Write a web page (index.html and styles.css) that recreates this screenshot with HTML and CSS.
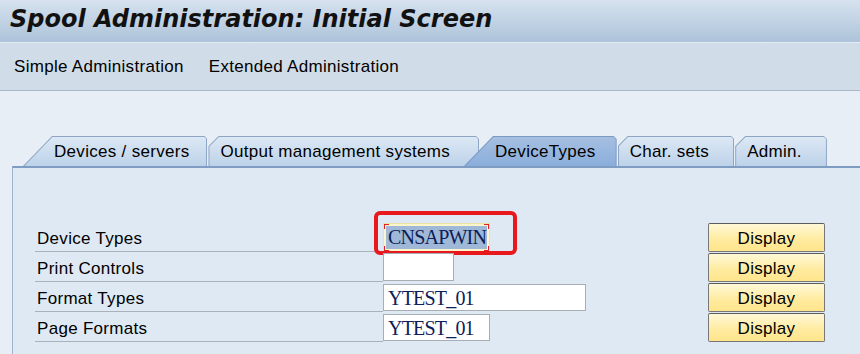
FILE: index.html
```html
<!DOCTYPE html>
<html lang="en">
  <head>
    <meta charset="utf-8" />
    <title>Spool Administration: Initial Screen</title>
    <link rel="stylesheet" href="styles.css">
  </head>
  <body>
    <header class="title-bar">
      <h1>Spool Administration: Initial Screen</h1>
    </header>

    <nav class="menu-bar">
      <span class="menu-item">Simple Administration</span>
      <span class="menu-item">Extended Administration</span>
    </nav>

    <main class="screen">
      <div class="tab-strip">
        <div class="tab tab-slanted"><span class="tab-label">Devices / servers</span></div>
        <div class="tab tab-wide"><span class="tab-label">Output management systems</span></div>
        <div class="tab tab-slanted tab-active"><span class="tab-label">DeviceTypes</span></div>
        <div class="tab"><span class="tab-label">Char. sets</span></div>
        <div class="tab"><span class="tab-label">Admin.</span></div>
      </div>

      <section class="tab-panel">
        <div class="form-grid">
          <div class="field-label">Device Types</div>
          <div class="field-cell">
            <div class="input input-focus"><span class="selection">CNSAPWIN</span></div>
            <div class="annotation"></div>
          </div>
          <button class="btn">Display</button>

          <div class="field-label">Print Controls</div>
          <div class="field-cell">
            <div class="input input-short"></div>
          </div>
          <button class="btn">Display</button>

          <div class="field-label">Format Types</div>
          <div class="field-cell">
            <div class="input input-long">YTEST_01</div>
          </div>
          <button class="btn">Display</button>

          <div class="field-label">Page Formats</div>
          <div class="field-cell">
            <div class="input input-medium">YTEST_01</div>
          </div>
          <button class="btn">Display</button>
        </div>
      </section>
    </main>
  </body>
</html>
```

FILE: styles.css
```css
* {
  box-sizing: border-box;
}

body {
  margin: 0;
  width: 860px;
  height: 354px;
  overflow: hidden;
  background: #e8eef6;
  font-family: "Liberation Sans", Arial, sans-serif;
  font-size: 17px;
  letter-spacing: 0.3px;
  color: #000;
}

/* title */
.title-bar {
  height: 43px;
  padding-left: 10px;
  background: linear-gradient(#d6e2ee, #adc3da);
  border-bottom: 1px solid #e4ecf4;
}

.title-bar h1 {
  margin: 0;
  font-family: "DejaVu Sans", Verdana, sans-serif;
  font-size: 24px;
  font-weight: bold;
  font-style: italic;
  letter-spacing: 0;
  line-height: 38px;
  color: #111;
}

/* menu */
.menu-bar {
  height: 48px;
  display: flex;
  align-items: center;
  gap: 25px;
  padding-left: 14px;
  background: #d0dce8;
  border-bottom: 1px solid #a8b8c8;
}

/* tabs */
.screen {
  padding-top: 45px;
}

.tab-strip {
  display: flex;
  gap: 1px;
  padding-left: 23px;
  height: 30px;
}

.tab {
  height: 30px;
  padding: 1px 1px 0 1px;
  background: #8ea6c4;
  clip-path: polygon(0 10px, 10px 0, calc(100% - 3px) 0, 100% 3px, 100% 100%, 0 100%);
}

.tab-label {
  display: block;
  height: 29px;
  line-height: 29px;
  padding: 0 24px 0 11px;
  white-space: nowrap;
  background: linear-gradient(#dce8f4, #bdd2e9);
  clip-path: polygon(0 9.4px, 9.4px 0, calc(100% - 2px) 0, 100% 2px, 100% 100%, 0 100%);
}

.tab-wide .tab-label {
  padding-right: 28px;
}

.tab-slanted {
  clip-path: polygon(0 100%, 29px 0, calc(100% - 3px) 0, 100% 3px, 100% 100%);
}

.tab-slanted .tab-label {
  padding-left: 30px;
  padding-right: 20px;
  clip-path: polygon(0.4px 100%, 28.4px 0, calc(100% - 2px) 0, 100% 2px, 100% 100%);
}

.tab-slanted:first-child .tab-label {
  padding-right: 17px;
}

.tab-active {
  margin-left: -16px;
  background: #7998c2;
  position: relative;
  z-index: 1;
}

.tab-active .tab-label {
  background: linear-gradient(#a6bfe1, #8aaedb);
}

/* panel */
.tab-panel {
  margin-left: 12px;
  height: 200px;
  padding: 54px 0 0 22px;
  background: #dfe9f3;
  border-top: 2px solid #7f9cc2;
  border-left: 1px solid #9fb3cb;
}

.form-grid {
  display: grid;
  grid-template-columns: 348px 325px 117px;
  grid-auto-rows: 30px;
}

.field-label {
  height: 30px;
  padding: 5px 0 0 2px;
  line-height: 24px;
  border-bottom: 1px solid #a9b1bb;
}

.field-cell {
  position: relative;
}

.input {
  height: 27px;
  margin-top: 2px;
  padding: 0 4px;
  background: #fff;
  border: 1px solid #a9aeb4;
  font-family: "Liberation Serif", "Times New Roman", serif;
  font-size: 20px;
  letter-spacing: -0.8px;
  line-height: 27px;
  color: #0c2058;
}

.input-short {
  width: 71px;
  margin-top: 1px;
  height: 28px;
}

.input-long {
  width: 203px;
}

.input-medium {
  width: 107px;
}

.input-focus {
  width: 107px;
  height: 29px;
  margin-top: 1px;
  padding: 2px;
  background: #fdf5cc;
  border-color: #ece0a2;
  line-height: 23px;
  background-image:
    linear-gradient(#e02222, #e02222), linear-gradient(#e02222, #e02222),
    linear-gradient(#e02222, #e02222), linear-gradient(#e02222, #e02222),
    linear-gradient(#e02222, #e02222), linear-gradient(#e02222, #e02222),
    linear-gradient(#e02222, #e02222), linear-gradient(#e02222, #e02222);
  background-repeat: no-repeat;
  background-size: 2px 6px, 6px 2px, 2px 6px, 6px 2px, 2px 6px, 6px 2px, 2px 6px, 6px 2px;
  background-position: left top, left top, right top, right top, left bottom, left bottom, right bottom, right bottom;
  background-origin: border-box;
}

.selection {
  display: block;
  height: 100%;
  padding-left: 2px;
  background: #9fb8d7;
}

/* red highlight drawn over the screenshot */
.annotation {
  position: absolute;
  left: -9px;
  top: -11px;
  width: 143px;
  height: 44px;
  border: 4px solid #e8191c;
  border-radius: 6px;
}

.btn {
  height: 29px;
  margin-top: 1px;
  padding: 3px 0 0;
  line-height: 24px;
  font-family: inherit;
  font-size: 17px;
  letter-spacing: 0.3px;
  color: #000;
  background: linear-gradient(#fff8d6, #ffeb9e 60%, #ffe58c);
  border: 1px solid #777;
  border-top-color: #5c5c5c;
  border-radius: 2px;
}
```
